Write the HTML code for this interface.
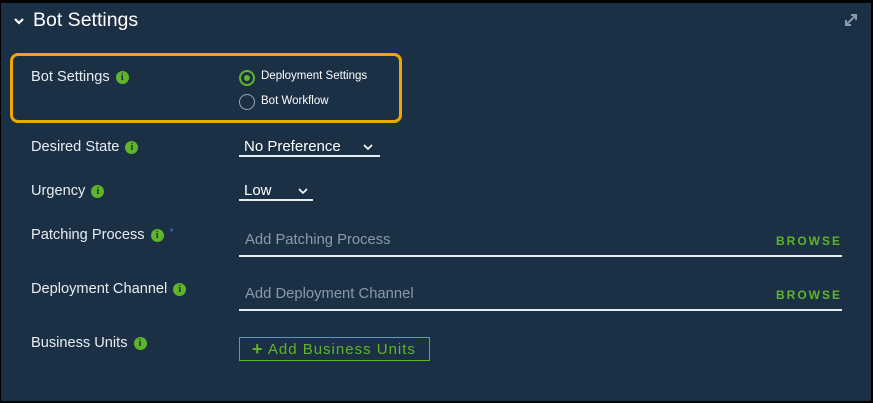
<!DOCTYPE html>
<html><head><meta charset="utf-8"><style>
*{margin:0;padding:0;box-sizing:border-box}
body{width:873px;height:403px;background:#000;font-family:"Liberation Sans",sans-serif;overflow:hidden;position:relative}
.p{position:absolute;left:1px;top:1px;width:870px;height:400px;background:#1c3045;border-top:2px solid #000}
.a{position:absolute;color:#fff;white-space:nowrap}
.lbl{font-size:14.6px;color:#e8edf2}
.i{display:inline-block;width:13px;height:13px;border-radius:50%;background:#5fb52a;color:#1c3045;font-size:10px;font-weight:bold;text-align:center;line-height:13px;vertical-align:1px;margin-left:6px;font-family:"Liberation Serif",serif}
.ul{position:absolute;height:2px;background:#e8edf2}
.ph{font-size:14.8px;color:#8a9aaa}
.br{font-size:12px;color:#5fb52a;font-weight:bold;letter-spacing:2px}
</style></head><body>
<div class="p"></div>
<svg class="a" style="left:13px;top:16px" width="12" height="10"><path d="M2 3 L6 7 L10 3" stroke="#fff" stroke-width="2.2" fill="none"/></svg>
<div class="a" style="left:33px;top:9px;font-size:19.5px">Bot Settings</div>
<svg class="a" style="left:844px;top:13px" width="14" height="14"><path d="M2 12 L12 2 M7 2 H12 V7 M2 7 V12 H7" stroke="#8a9aaa" stroke-width="2" fill="none"/></svg>
<div class="a" style="left:10px;top:53px;width:392px;height:70px;border:3px solid #f0a800;border-radius:8px"></div>
<div class="a lbl" style="left:31px;top:69px">Bot Settings<span class="i">i</span></div>
<div class="a" style="left:239px;top:70px;width:16px;height:16px;border-radius:50%;border:2px solid #5fb52a"><div style="position:absolute;left:3px;top:3px;width:6px;height:6px;border-radius:50%;background:#5fb52a"></div></div>
<div class="a" style="left:261px;top:70px;font-size:11.5px">Deployment Settings</div>
<div class="a" style="left:239px;top:94px;width:16px;height:16px;border-radius:50%;border:1.5px solid #9aa6b2"></div>
<div class="a" style="left:261px;top:95px;font-size:11.5px">Bot Workflow</div>
<div class="a lbl" style="left:31px;top:139px">Desired State<span class="i">i</span></div>
<div class="a" style="left:244px;top:138px;font-size:15px">No Preference</div>
<svg class="a" style="left:363px;top:143px" width="10" height="8"><path d="M1 2 L5 6 L9 2" stroke="#fff" stroke-width="1.6" fill="none"/></svg>
<div class="ul" style="left:239px;top:155px;width:141px"></div>
<div class="a lbl" style="left:31px;top:183px">Urgency<span class="i">i</span></div>
<div class="a" style="left:244px;top:182px;font-size:15px">Low</div>
<svg class="a" style="left:298px;top:187px" width="10" height="8"><path d="M1 2 L5 6 L9 2" stroke="#fff" stroke-width="1.6" fill="none"/></svg>
<div class="ul" style="left:239px;top:199px;width:74px"></div>
<div class="a lbl" style="left:31px;top:227px">Patching Process<span class="i">i</span><span style="color:#3a7bd5;font-size:10px;margin-left:6px;vertical-align:4px">*</span></div>
<div class="a ph" style="left:245px;top:232px">Add Patching Process</div>
<div class="a br" style="left:776px;top:234px">BROWSE</div>
<div class="ul" style="left:239px;top:255px;width:603px"></div>
<div class="a lbl" style="left:31px;top:281px">Deployment Channel<span class="i">i</span></div>
<div class="a ph" style="left:245px;top:286px">Add Deployment Channel</div>
<div class="a br" style="left:776px;top:288px">BROWSE</div>
<div class="ul" style="left:239px;top:309px;width:603px"></div>
<div class="a lbl" style="left:31px;top:335px">Business Units<span class="i">i</span></div>
<div class="a" style="left:239px;top:337px;width:191px;height:24px;border:1px solid #5fb52a;color:#5fb52a;font-size:15px;letter-spacing:1px;line-height:22px;padding-left:12px"><b style="font-size:18px;vertical-align:-1px">+</b> Add Business Units</div>
</body></html>
